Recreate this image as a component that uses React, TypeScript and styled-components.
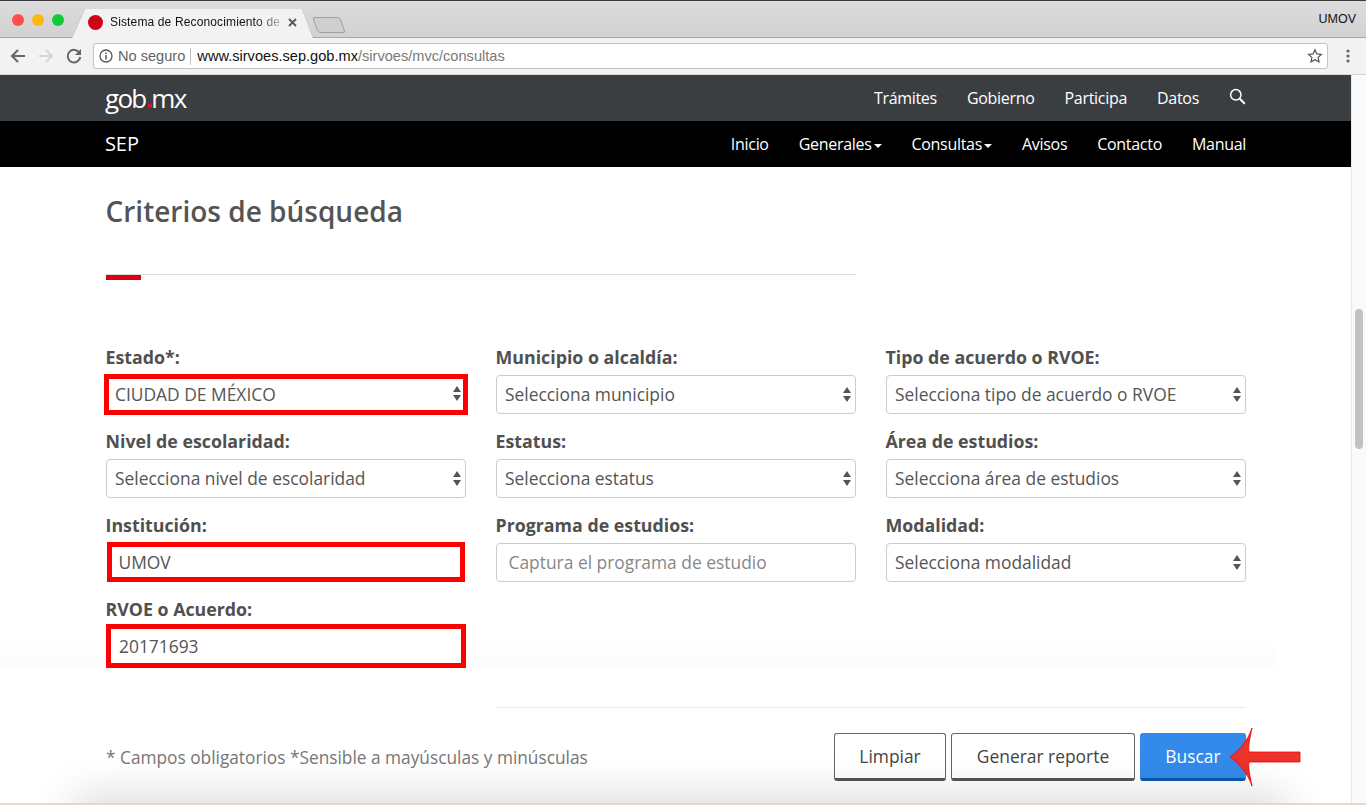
import React from 'react';
import styled, { createGlobalStyle } from 'styled-components';

const GlobalStyle = createGlobalStyle`
  html, body {
    margin: 0;
    padding: 0;
    height: 100%;
    overflow: hidden;
    background: #fff;
  }
  * {
    box-sizing: border-box;
  }
`;

const Page = styled.div`
  width: 1366px;
  height: 805px;
  display: flex;
  flex-direction: column;
  overflow: hidden;
  font-family: 'Open Sans', sans-serif;
`;

/* browser chrome */
const TabStrip = styled.div`
  height: 38px;
  flex: none;
  display: flex;
  align-items: flex-end;
  background: linear-gradient(#dcdcdc, #d2d2d2);
  border-top: 1px solid #3a3a3a;
  border-bottom: 1px solid #a8a8a8;
  font-family: 'Liberation Sans', sans-serif;
`;

const Lights = styled.div`
  display: flex;
  gap: 8px;
  padding: 0 0 11px 12px;
  width: 72px;
  flex: none;
`;

const Light = styled.span<{ $color: string }>`
  width: 12px;
  height: 12px;
  border-radius: 50%;
  background: ${(p) => p.$color};
`;

const TabOutline = styled.div`
  flex: none;
  margin-bottom: -1px;
  filter: drop-shadow(0 0 0.6px #777);
`;

const Tab = styled.div`
  width: 241px;
  height: 29px;
  display: flex;
  align-items: center;
  gap: 7px;
  padding: 0 16px 3px 16px;
  background: #f2f2f2;
  font-size: 12px;
  letter-spacing: 0.14px;
  color: #111;
  clip-path: polygon(0 100%, 13px 0, 230px 0, 241px 100%);
`;

const Favicon = styled.span`
  width: 15px;
  height: 15px;
  flex: none;
  border-radius: 50%;
  background: #d0021b;
`;

const TabTitle = styled.span`
  flex: 1;
  white-space: nowrap;
  -webkit-mask-image: linear-gradient(90deg, #000 85%, rgba(0, 0, 0, 0.25));
  mask-image: linear-gradient(90deg, #000 85%, rgba(0, 0, 0, 0.25));
`;

const TabClose = styled.svg`
  width: 9px;
  height: 9px;
  flex: none;
`;

const NewTab = styled.div`
  width: 28px;
  height: 16px;
  flex: none;
  margin: 0 0 4px 2px;
  background: #cfcfcf;
  border: 1px solid #a0a0a0;
  border-radius: 3px;
  transform: skewX(20deg);
`;

const ProfileName = styled.div`
  margin-left: auto;
  align-self: center;
  padding: 0 10px 1px 0;
  font-size: 12.5px;
  color: #111;
`;

const Toolbar = styled.div`
  height: 37px;
  flex: none;
  display: flex;
  align-items: center;
  background: #f2f2f2;
  border-bottom: 1px solid #d4d4d4;
  padding-left: 9px;
  font-family: 'Liberation Sans', sans-serif;
`;

const ToolIcon = styled.svg`
  width: 18px;
  height: 18px;
  flex: none;
  margin-right: 10px;
`;

const UrlBar = styled.div`
  width: 1235px;
  height: 26px;
  flex: none;
  display: flex;
  align-items: center;
  padding: 0 4px 0 5px;
  background: #fff;
  border: 1px solid #c4c4c4;
  border-radius: 3px;
  font-size: 14.6px;
`;

const Secure = styled.span`
  color: #5f6368;
  margin-left: 5px;
  padding-right: 5px;
  margin-right: 6px;
  border-right: 1px solid #bdbdbd;
  line-height: 17px;
`;

const Host = styled.span`
  color: #111;
`;

const UrlPath = styled.span`
  color: #7a7a7a;
`;

const Star = styled.svg`
  width: 16px;
  height: 16px;
  margin-left: auto;
`;

const MoreDots = styled.svg`
  width: 4px;
  height: 16px;
  margin-left: 18px;
`;

/* site */
const Viewport = styled.div`
  flex: 1;
  display: flex;
  min-height: 0;
  border-bottom: 2px solid #e6d8c8;
`;

const Site = styled.div`
  position: relative;
  flex: 1;
  min-width: 0;
  display: flex;
  flex-direction: column;
  overflow: hidden;
  background: linear-gradient(#fff, #fbfbfb) 0 565px / 1275px 27px no-repeat #fff;
  /* soft shadow of the pasted capture along the bottom edge */
  &::after {
    content: '';
    position: absolute;
    left: 80px;
    right: 70px;
    bottom: -24px;
    height: 24px;
    box-shadow: 0 0 42px 6px rgba(0, 0, 0, 0.17);
    pointer-events: none;
  }
`;

const Scrollbar = styled.div`
  width: 15px;
  flex: none;
  padding: 234px 3px 0 3px;
  background: #fafafa;
  border-left: 1px solid #e8e8e8;
`;

const ScrollThumb = styled.div`
  height: 140px;
  border-radius: 5px;
  background: #c2c2c2;
`;

const NavBar = styled.div<{ $dark?: boolean }>`
  height: 46px;
  flex: none;
  display: flex;
  align-items: center;
  justify-content: space-between;
  padding: 0 105px;
  background: ${(p) => (p.$dark ? '#000' : '#3b3e41')};
  color: #fff;
`;

const Logo = styled.div`
  font-size: 26px;
  letter-spacing: -1.7px;
  line-height: 1;
  padding-bottom: 1px;
`;

const LogoDot = styled.span`
  color: #e0101b;
  font-weight: 700;
`;

const Brand = styled.div`
  font-size: 20px;
  letter-spacing: -0.1px;
  padding-bottom: 2px;
`;

const NavLinks = styled.div`
  display: flex;
  align-items: center;
  gap: 30px;
  font-size: 16px;
  letter-spacing: -0.3px;
`;

const Caret = styled.span`
  display: inline-block;
  margin-left: 2px;
  vertical-align: middle;
  border-top: 4px solid #fff;
  border-left: 4px solid transparent;
  border-right: 4px solid transparent;
`;

const SearchIcon = styled.svg`
  width: 17px;
  height: 17px;
  margin-bottom: 4px;
`;

const Content = styled.main`
  padding: 0 105px 0 106px;
  flex: 1;
  display: flex;
  flex-direction: column;
  min-height: 0;
`;

const Title = styled.h1`
  margin: 25px 0 0 -0.5px;
  font-size: 28px;
  line-height: 38px;
  font-weight: 600;
  color: #545454;
`;

const Rule = styled.div`
  position: relative;
  width: 750px;
  height: 1px;
  margin-top: 44px;
  background: #dcdcdc;
  &::before {
    content: '';
    position: absolute;
    left: 0;
    top: 1px;
    width: 35px;
    height: 5px;
    background: #d9000f;
  }
`;

const FormGrid = styled.div`
  display: grid;
  grid-template-columns: repeat(3, 360px);
  column-gap: 30px;
  grid-auto-rows: 84px;
  margin-top: 72px;
`;

const Field = styled.div`
  display: flex;
  flex-direction: column;
`;

const Label = styled.label`
  font-size: 17.8px;
  line-height: 22px;
  font-weight: 700;
  color: #505050;
  margin: -1px 0 7px -0.5px;
`;

const controlBase = `
  width: 100%;
  height: 39px;
  padding: 0 8px 2px;
  font-family: 'Open Sans', sans-serif;
  font-size: 17.4px;
  color: #555;
  background: #fff;
  border: 1px solid #ccc;
  border-radius: 4px;
  outline: none;
`;

const SelectWrap = styled.div<{ $marked?: boolean }>`
  position: relative;
  ${(p) => p.$marked && 'margin: -1px -2px 0;'}
  &::before,
  &::after {
    content: '';
    position: absolute;
    right: ${(p) => (p.$marked ? '7px' : '5px')};
    border-left: 4.5px solid transparent;
    border-right: 4.5px solid transparent;
    pointer-events: none;
  }
  &::before {
    top: 12px;
    border-bottom: 6px solid #555;
  }
  &::after {
    top: 21px;
    border-top: 6px solid #555;
  }
`;

const Select = styled.select<{ $marked?: boolean }>`
  ${controlBase}
  appearance: none;
  ${(p) =>
    p.$marked &&
    `
    height: 41px;
    border: 5px solid #f00;
    border-radius: 0;
    padding: 0 6px 2px;
  `}
`;

const Input = styled.input<{ $marked?: boolean; $inset?: boolean }>`
  ${controlBase}
  padding: 0 11.5px 2px;
  &::placeholder {
    color: #888;
    opacity: 1;
  }
  ${(p) =>
    p.$marked &&
    `
    height: 44px;
    margin-top: -3px;
    border: 5px solid #f00;
    border-radius: 0;
    padding: 0 8px;
  `}
  ${(p) =>
    p.$inset &&
    `
    width: 358px;
    height: 40px;
    margin-top: -1px;
    margin-left: 1px;
    padding: 0 6.5px;
  `}
`;

const FooterRule = styled.div`
  margin: 24px 0 25px 390px;
  height: 1px;
  background: #eaeaea;
`;

const FooterRow = styled.div`
  display: flex;
  align-items: center;
`;

const Note = styled.div`
  font-size: 17.3px;
  color: #777;
`;

const Buttons = styled.div`
  position: relative;
  margin-left: auto;
  display: flex;
  gap: 5px;
`;

const Btn = styled.button<{ $primary?: boolean; $wide: number }>`
  height: 48px;
  width: ${(p) => p.$wide}px;
  font-family: 'Open Sans', sans-serif;
  font-size: 17.4px;
  border-radius: 3px;
  border: 1px solid ${(p) => (p.$primary ? '#338aea' : '#666')};
  border-bottom: 3px solid ${(p) => (p.$primary ? '#0a57b0' : '#555')};
  background: ${(p) => (p.$primary ? '#338aea' : '#fff')};
  color: ${(p) => (p.$primary ? '#fff' : '#444')};
`;

const Arrow = styled.svg`
  position: absolute;
  left: 394px;
  top: -7px;
  width: 74px;
  height: 62px;
`;

function Dropdown({ value, marked }: { value: string; marked?: boolean }) {
  return (
    <SelectWrap $marked={marked}>
      <Select $marked={marked} defaultValue={value}>
        <option>{value}</option>
      </Select>
    </SelectWrap>
  );
}

export default function App() {
  return (
    <Page>
      <GlobalStyle />
      <TabStrip>
        <Lights>
          <Light $color="#fc4f4a" />
          <Light $color="#fdb80f" />
          <Light $color="#12c93a" />
        </Lights>
        <TabOutline>
          <Tab>
            <Favicon />
            <TabTitle>Sistema de Reconocimiento de</TabTitle>
            <TabClose viewBox="0 0 9 9">
              <path d="M1 1l7 7M8 1l-7 7" stroke="#555" strokeWidth="1.8" />
            </TabClose>
          </Tab>
        </TabOutline>
        <NewTab />
        <ProfileName>UMOV</ProfileName>
      </TabStrip>
      <Toolbar>
        <ToolIcon viewBox="0 0 18 18">
          <path d="M16 9H3M9 3L3 9l6 6" fill="none" stroke="#666" strokeWidth="2" />
        </ToolIcon>
        <ToolIcon viewBox="0 0 18 18">
          <path d="M2 9h13M9 3l6 6-6 6" fill="none" stroke="#d6d6d6" strokeWidth="2" />
        </ToolIcon>
        <ToolIcon viewBox="0 0 18 18">
          <path d="M14.5 6A6.3 6.3 0 1 0 15.3 10" fill="none" stroke="#666" strokeWidth="2" />
          <path d="M16 2v6h-6z" fill="#666" />
        </ToolIcon>
        <UrlBar>
          <svg width="14" height="14" viewBox="0 0 14 14">
            <circle cx="7" cy="7" r="6" fill="none" stroke="#555" strokeWidth="1.3" />
            <path d="M7 6v4.4M7 3.4v1.5" stroke="#555" strokeWidth="1.5" />
          </svg>
          <Secure>No seguro</Secure>
          <Host>www.sirvoes.sep.gob.mx</Host>
          <UrlPath>/sirvoes/mvc/consultas</UrlPath>
          <Star viewBox="0 0 16 16">
            <path
              d="M8 1.8l1.9 4.1 4.5.5-3.3 3 .9 4.4L8 11.6l-4 2.2.9-4.4-3.3-3 4.5-.5z"
              fill="none"
              stroke="#555"
              strokeWidth="1.2"
            />
          </Star>
        </UrlBar>
        <MoreDots viewBox="0 0 4 16">
          <circle cx="2" cy="3" r="1.6" fill="#666" />
          <circle cx="2" cy="8" r="1.6" fill="#666" />
          <circle cx="2" cy="13" r="1.6" fill="#666" />
        </MoreDots>
      </Toolbar>
      <Viewport>
        <Site>
          <NavBar>
            <Logo>
              gob<LogoDot>.</LogoDot>mx
            </Logo>
            <NavLinks>
              <span>Trámites</span>
              <span>Gobierno</span>
              <span>Participa</span>
              <span>Datos</span>
              <SearchIcon viewBox="0 0 17 17">
                <circle cx="6.8" cy="6.8" r="5.2" fill="none" stroke="#fff" strokeWidth="1.5" />
                <path d="M10.8 10.8l5 5" stroke="#fff" strokeWidth="2" />
              </SearchIcon>
            </NavLinks>
          </NavBar>
          <NavBar $dark>
            <Brand>SEP</Brand>
            <NavLinks>
              <span>Inicio</span>
              <span>
                Generales
                <Caret />
              </span>
              <span>
                Consultas
                <Caret />
              </span>
              <span>Avisos</span>
              <span>Contacto</span>
              <span>Manual</span>
            </NavLinks>
          </NavBar>
          <Content>
            <Title>Criterios de búsqueda</Title>
            <Rule />
            <FormGrid>
              <Field>
                <Label>Estado*:</Label>
                <Dropdown value="CIUDAD DE MÉXICO" marked />
              </Field>
              <Field>
                <Label>Municipio o alcaldía:</Label>
                <Dropdown value="Selecciona municipio" />
              </Field>
              <Field>
                <Label>Tipo de acuerdo o RVOE:</Label>
                <Dropdown value="Selecciona tipo de acuerdo o RVOE" />
              </Field>
              <Field>
                <Label>Nivel de escolaridad:</Label>
                <Dropdown value="Selecciona nivel de escolaridad" />
              </Field>
              <Field>
                <Label>Estatus:</Label>
                <Dropdown value="Selecciona estatus" />
              </Field>
              <Field>
                <Label>Área de estudios:</Label>
                <Dropdown value="Selecciona área de estudios" />
              </Field>
              <Field>
                <Label>Institución:</Label>
                <Input $marked $inset defaultValue="UMOV" />
              </Field>
              <Field>
                <Label>Programa de estudios:</Label>
                <Input placeholder="Captura el programa de estudio" />
              </Field>
              <Field>
                <Label>Modalidad:</Label>
                <Dropdown value="Selecciona modalidad" />
              </Field>
              <Field>
                <Label>RVOE o Acuerdo:</Label>
                <Input $marked defaultValue="20171693" />
              </Field>
            </FormGrid>
            <FooterRule />
            <FooterRow>
              <Note>* Campos obligatorios *Sensible a mayúsculas y minúsculas</Note>
              <Buttons>
                <Btn $wide={112}>Limpiar</Btn>
                <Btn $wide={184}>Generar reporte</Btn>
                <Btn $primary $wide={106}>
                  Buscar
                </Btn>
                <Arrow viewBox="0 0 74 62">
                  <path
                    d="M2 31C12 24 20 14 24 2C22 12 20 20 21 26H72V36H21C20 42 22 50 24 60C20 48 12 38 2 31Z"
                    fill="#ea332a"
                    stroke="#f00"
                    strokeWidth="0.8"
                  />
                </Arrow>
              </Buttons>
            </FooterRow>
          </Content>
        </Site>
        <Scrollbar>
          <ScrollThumb />
        </Scrollbar>
      </Viewport>
    </Page>
  );
}
